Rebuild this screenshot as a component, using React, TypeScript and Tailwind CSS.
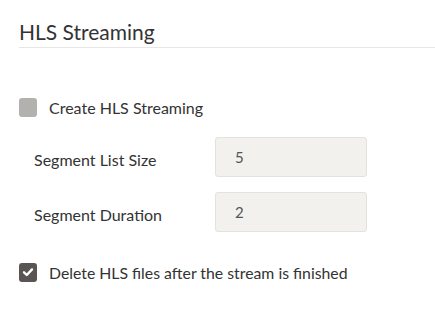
export default function App() {
  return (
    <div className="min-h-screen bg-white pl-[19px] pt-[18px] font-['Lato',sans-serif] text-[#333]">
      <h2 className="border-b border-[#e6e6e6] pb-[1px] text-[21px] leading-[28px]">
        HLS Streaming
      </h2>

      <div className="mt-[48px] flex items-center gap-[12px]">
        <span className="block h-[19px] w-[18px] rounded-[3px] bg-[#b3b1ad]" />
        <span className="pt-[2px] text-[16px] leading-[20px]">Create HLS Streaming</span>
      </div>

      <div className="mt-[19px] flex flex-col gap-[15px] pl-[15px]">
        <div className="flex items-center">
          <span className="w-[181px] pt-[6px] text-[16px] leading-[20px]">Segment List Size</span>
          <div className="flex h-[40px] w-[152px] items-center rounded-[3px] border border-[#e4e2df] bg-[#f2f1ee] pl-[19px] text-[15px] text-[#555]">
            5
          </div>
        </div>
        <div className="flex items-center">
          <span className="w-[181px] pt-[6px] text-[16px] leading-[20px]">Segment Duration</span>
          <div className="flex h-[40px] w-[152px] items-center rounded-[3px] border border-[#e4e2df] bg-[#f2f1ee] pl-[19px] text-[15px] text-[#555]">
            2
          </div>
        </div>
      </div>

      <div className="mt-[29px] flex items-center gap-[12px]">
        <span className="flex h-[19px] w-[18px] items-center justify-center rounded-[3px] bg-[#5a5552]">
          <svg viewBox="0 0 12 12" className="h-[12px] w-[12px]">
            <path d="M2 6.3 L4.8 9 L10 3.4" fill="none" stroke="#fff" strokeWidth="2.4" strokeLinecap="round" strokeLinejoin="round" />
          </svg>
        </span>
        <span className="pt-[2px] text-[15.8px] leading-[20px]">Delete HLS files after the stream is finished</span>
      </div>
    </div>
  );
}
